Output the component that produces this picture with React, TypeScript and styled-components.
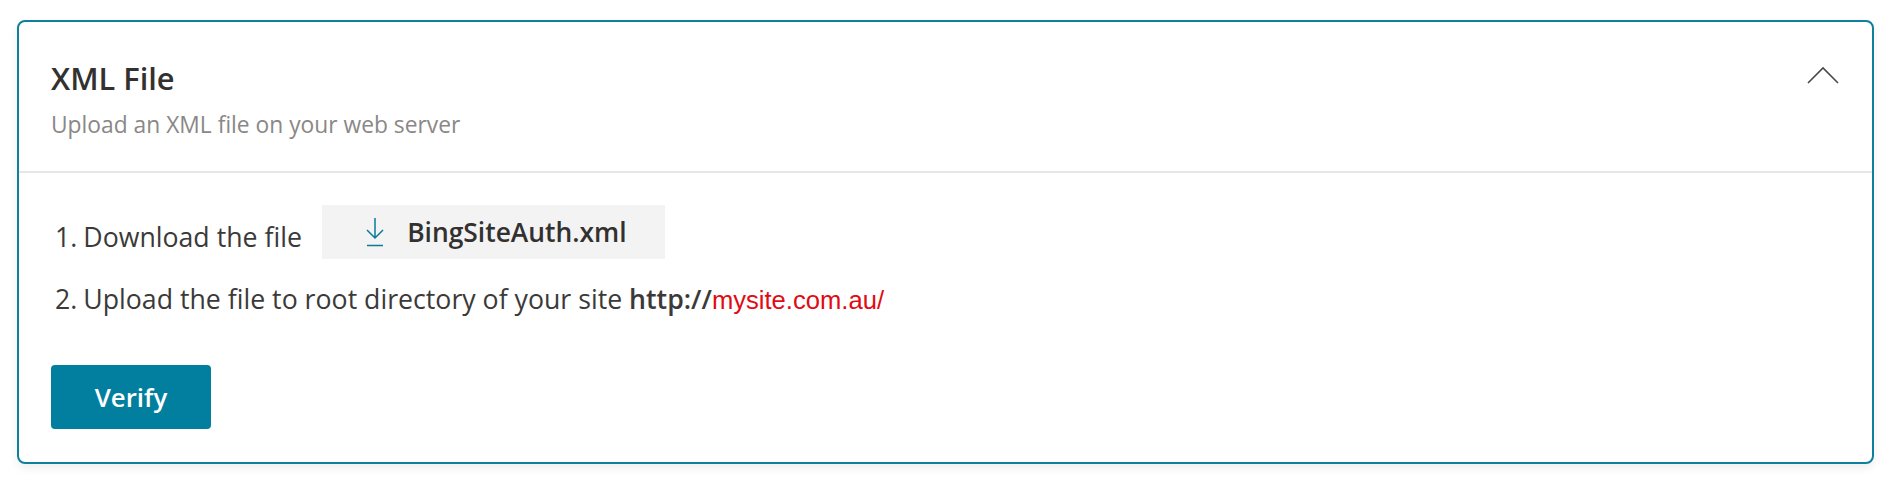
import styled, { createGlobalStyle } from 'styled-components';
import { ReactNode } from 'react';

const GlobalStyle = createGlobalStyle`
  html, body {
    margin: 0;
    padding: 0;
    background: #fff;
  }
  body {
    font-family: 'Open Sans', 'Noto Sans', sans-serif;
    color: #323130;
  }
`;

const Step = ({ number, children }: { number: number; children: ReactNode }) => (
  <StepRow>
    <StepText>{number}.</StepText>
    {children}
  </StepRow>
);

export default function App() {
  return (
    <Page>
      <GlobalStyle />
      <Card>
        <Header>
          <div>
            <Title>XML File</Title>
            <Subtitle>Upload an XML file on your web server</Subtitle>
          </div>
          <Collapse aria-label="Collapse">
            <svg width="32" height="18" viewBox="0 0 32 18" fill="none">
              <path d="M1 17 L16 2 L31 17" stroke="#4a4a4a" strokeWidth="1.6" />
            </svg>
          </Collapse>
        </Header>
        <Body>
          <Step number={1}>
            <StepText>Download the file</StepText>
            <DownloadButton>
              <svg width="20" height="30" viewBox="0 0 20 30" fill="none">
                <path d="M10 1 V21 M2 13 L10 21 L18 13 M2 28.5 H18" stroke="#0a7a9a" strokeWidth="1.5" />
              </svg>
              BingSiteAuth.xml
            </DownloadButton>
          </Step>
          <Step number={2}>
            <StepText>
              Upload the file to root directory of your site <Bold>http://</Bold>
              <SiteName>mysite.com.au/</SiteName>
            </StepText>
          </Step>
          <VerifyButton>Verify</VerifyButton>
        </Body>
      </Card>
    </Page>
  );
}

const Page = styled.div`
  width: 1892px;
  height: 486px;
  padding: 20px 18px 0 17px;
  box-sizing: border-box;
  overflow: hidden;
`;

const Card = styled.section`
  height: 444px;
  box-sizing: border-box;
  border: 2px solid #0f7f9e;
  border-radius: 8px;
  box-shadow: 0 4px 10px rgba(0, 0, 0, 0.07);
  display: flex;
  flex-direction: column;
`;

const Header = styled.header`
  height: 151px;
  box-sizing: border-box;
  border-bottom: 2px solid #e6e6e6;
  padding: 34px 33px 0 32px;
  display: flex;
  justify-content: space-between;
  align-items: flex-start;
`;

const Title = styled.h2`
  margin: 0;
  font-size: 30.8px;
  line-height: 44px;
  font-weight: 600;
  color: #323130;
`;

const Subtitle = styled.p`
  margin: 10px 0 0;
  font-size: 22.8px;
  line-height: 30px;
  color: #8a8886;
`;

const Collapse = styled.button`
  border: none;
  background: none;
  padding: 0;
  margin-top: 10px;
  display: flex;
`;

const Body = styled.div`
  padding: 32px 33px 0 32px;
  display: flex;
  flex-direction: column;
  align-items: flex-start;
`;

const StepRow = styled.div`
  display: flex;
  align-items: center;
  gap: 6px;
  font-size: 26.7px;
  line-height: 54px;
  padding-left: 4px;
  height: 54px;
  margin-bottom: 8px;
  color: #3b3a39;
`;

const StepText = styled.span`
  padding-top: 10px;
`;

const DownloadButton = styled.button`
  width: 343px;
  height: 54px;
  margin-left: 14px;
  padding: 0 0 0 5px;
  border: none;
  background: #f3f3f3;
  font: inherit;
  font-size: 26.4px;
  font-weight: 600;
  color: #323130;
  display: flex;
  align-items: center;
  justify-content: center;
  gap: 22px;
`;

const Bold = styled.b`
  font-weight: 600;
`;

const SiteName = styled.span`
  font-family: 'Liberation Sans', Arial, sans-serif;
  font-size: 25.6px;
  color: #e00b14;
`;

const VerifyButton = styled.button`
  width: 160px;
  height: 64px;
  margin-top: 36px;
  border: none;
  border-radius: 4px;
  background: #027f9f;
  color: #fff;
  font: inherit;
  font-size: 25.8px;
  font-weight: 600;
`;
